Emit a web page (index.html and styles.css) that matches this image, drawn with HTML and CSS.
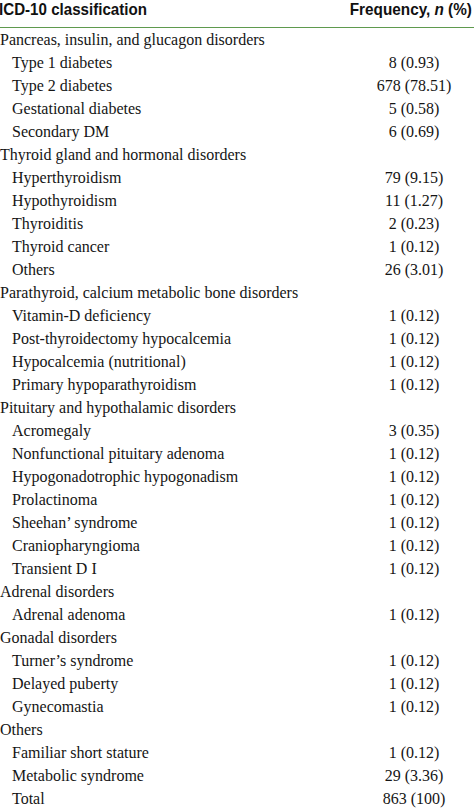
FILE: index.html
```html
<!DOCTYPE html>
<html>
<head>
<meta charset="utf-8">
<link rel="stylesheet" href="styles.css">
</head>
<body>
<div class="table">
  <div class="head">
    <div class="h-left">ICD-10 classification</div>
    <div class="h-right">Frequency, <i>n</i> (%)</div>
  </div>
  <div class="row cat"><div>Pancreas, insulin, and glucagon disorders</div><div></div></div>
  <div class="row sub"><div>Type 1 diabetes</div><div class="v">8 (0.93)</div></div>
  <div class="row sub"><div>Type 2 diabetes</div><div class="v">678 (78.51)</div></div>
  <div class="row sub"><div>Gestational diabetes</div><div class="v">5 (0.58)</div></div>
  <div class="row sub"><div>Secondary DM</div><div class="v">6 (0.69)</div></div>
  <div class="row cat"><div>Thyroid gland and hormonal disorders</div><div></div></div>
  <div class="row sub"><div>Hyperthyroidism</div><div class="v">79 (9.15)</div></div>
  <div class="row sub"><div>Hypothyroidism</div><div class="v">11 (1.27)</div></div>
  <div class="row sub"><div>Thyroiditis</div><div class="v">2 (0.23)</div></div>
  <div class="row sub"><div>Thyroid cancer</div><div class="v">1 (0.12)</div></div>
  <div class="row sub"><div>Others</div><div class="v">26 (3.01)</div></div>
  <div class="row cat"><div>Parathyroid, calcium metabolic bone disorders</div><div></div></div>
  <div class="row sub"><div>Vitamin-D deficiency</div><div class="v">1 (0.12)</div></div>
  <div class="row sub"><div>Post-thyroidectomy hypocalcemia</div><div class="v">1 (0.12)</div></div>
  <div class="row sub"><div>Hypocalcemia (nutritional)</div><div class="v">1 (0.12)</div></div>
  <div class="row sub"><div>Primary hypoparathyroidism</div><div class="v">1 (0.12)</div></div>
  <div class="row cat"><div>Pituitary and hypothalamic disorders</div><div></div></div>
  <div class="row sub"><div>Acromegaly</div><div class="v">3 (0.35)</div></div>
  <div class="row sub"><div>Nonfunctional pituitary adenoma</div><div class="v">1 (0.12)</div></div>
  <div class="row sub"><div>Hypogonadotrophic hypogonadism</div><div class="v">1 (0.12)</div></div>
  <div class="row sub"><div>Prolactinoma</div><div class="v">1 (0.12)</div></div>
  <div class="row sub"><div>Sheehan’ syndrome</div><div class="v">1 (0.12)</div></div>
  <div class="row sub"><div>Craniopharyngioma</div><div class="v">1 (0.12)</div></div>
  <div class="row sub"><div>Transient D I</div><div class="v">1 (0.12)</div></div>
  <div class="row cat"><div>Adrenal disorders</div><div></div></div>
  <div class="row sub"><div>Adrenal adenoma</div><div class="v">1 (0.12)</div></div>
  <div class="row cat"><div>Gonadal disorders</div><div></div></div>
  <div class="row sub"><div>Turner’s syndrome</div><div class="v">1 (0.12)</div></div>
  <div class="row sub"><div>Delayed puberty</div><div class="v">1 (0.12)</div></div>
  <div class="row sub"><div>Gynecomastia</div><div class="v">1 (0.12)</div></div>
  <div class="row cat"><div>Others</div><div></div></div>
  <div class="row sub"><div>Familiar short stature</div><div class="v">1 (0.12)</div></div>
  <div class="row sub"><div>Metabolic syndrome</div><div class="v">29 (3.36)</div></div>
  <div class="row sub"><div>Total</div><div class="v">863 (100)</div></div>
</div>
</body>
</html>
```
FILE: styles.css
```css
html, body {
  margin: 0;
  padding: 0;
  background: #ffffff;
}
.table {
  width: 475px;
  margin-left: -1px;
  color: #151515;
  font-family: "Liberation Serif", "Times New Roman", serif;
  font-size: 16px;
}
.head {
  display: flex;
  justify-content: space-between;
  align-items: flex-start;
  height: 27px;
  border-bottom: 1px solid #5f9a4e;
  font-family: "Liberation Sans", Arial, sans-serif;
  font-weight: bold;
  font-size: 17px;
  line-height: 20px;
  color: #111;
}
.h-left {
  transform: scaleX(0.89);
  transform-origin: left center;
}
.h-right {
  padding-right: 2px;
  transform: scaleX(0.9);
  transform-origin: right center;
}
.row {
  display: grid;
  grid-template-columns: 1fr 122px;
  height: 23px;
  align-items: center;
  line-height: 23px;
  white-space: nowrap;
}
.cat > div:first-child { padding-left: 1px; }
.sub > div:first-child { padding-left: 13px; }
.v { text-align: center; padding-left: 2px; }
```
